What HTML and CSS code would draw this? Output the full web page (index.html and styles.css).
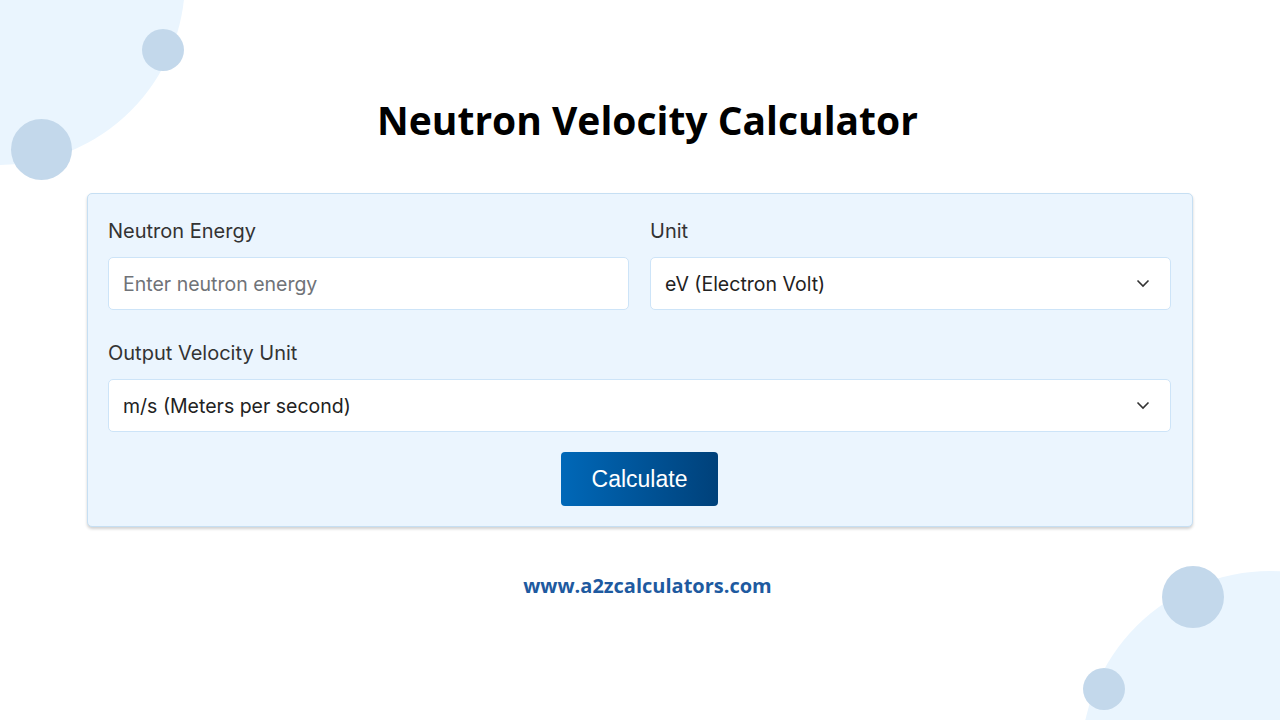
FILE: index.html
```html
<!DOCTYPE html>
<html lang="en">
<head>
<meta charset="utf-8">
<title>Neutron Velocity Calculator</title>
<link rel="stylesheet" href="styles.css">
</head>
<body>
<div class="deco">
  <span class="blob blob-tl"></span>
  <span class="dot dot-1"></span>
  <span class="dot dot-2"></span>
  <span class="blob blob-br"></span>
  <span class="dot dot-3"></span>
  <span class="dot dot-4"></span>
</div>
<main class="page">
  <h1 class="title">Neutron Velocity Calculator</h1>
  <section class="card">
    <div class="row">
      <div class="field">
        <label class="label">Neutron Energy</label>
        <div class="control"><span class="placeholder">Enter neutron energy</span></div>
      </div>
      <div class="field">
        <label class="label">Unit</label>
        <div class="control select"><span class="value">eV (Electron Volt)</span>
          <svg class="chev" width="14" height="9" viewBox="0 0 14 9"><path d="M1.5 1.5 L7 7 L12.5 1.5" fill="none" stroke="#333" stroke-width="1.6"/></svg>
        </div>
      </div>
    </div>
    <div class="field">
      <label class="label">Output Velocity Unit</label>
      <div class="control select"><span class="value">m/s (Meters per second)</span>
        <svg class="chev" width="14" height="9" viewBox="0 0 14 9"><path d="M1.5 1.5 L7 7 L12.5 1.5" fill="none" stroke="#333" stroke-width="1.6"/></svg>
      </div>
    </div>
    <div class="actions"><button class="btn">Calculate</button></div>
  </section>
  <p class="site">www.a2zcalculators.com</p>
</main>
</body>
</html>
```
FILE: styles.css
```css
* { box-sizing: border-box; }
html, body { margin: 0; padding: 0; }
body {
  width: 1280px;
  height: 720px;
  background: #ffffff;
  overflow: hidden;
  position: relative;
  font-family: Inter, "Noto Sans", sans-serif;
}
.deco { position: absolute; inset: 0; overflow: hidden; pointer-events: none; }
.blob, .dot { position: absolute; border-radius: 50%; display: block; }
.blob { background: #eaf5fe; }
.dot { background: #c3d8eb; }
.blob-tl { left: -185px; top: -205px; width: 370px; height: 370px; }
.blob-br { left: 1081px; top: 571px; width: 378px; height: 378px; }
.dot-1 { left: 142px; top: 29px; width: 42px; height: 42px; }
.dot-2 { left: 11px; top: 119px; width: 61px; height: 61px; }
.dot-3 { left: 1162px; top: 566px; width: 62px; height: 62px; }
.dot-4 { left: 1083px; top: 668px; width: 42px; height: 42px; }

.page {
  position: relative;
  padding: 94px 87px 0;
  display: flex;
  flex-direction: column;
  align-items: center;
}
.title {
  margin: 0 0 0 15px;
  font-family: "Open Sans", sans-serif;
  font-weight: 700;
  font-size: 39px;
  line-height: 52px;
  color: #000;
}
.card {
  margin-top: 47px;
  width: 1106px;
  background: #ebf5fe;
  border: 1px solid #c6dff3;
  border-radius: 5px;
  box-shadow: 0 2px 3px rgba(0,0,0,0.18);
  padding: 20px 21px 20px 20px;
  display: flex;
  flex-direction: column;
}
.row { display: grid; grid-template-columns: 1fr 1fr; gap: 21px; }
.field { display: flex; flex-direction: column; }
.row + .field { margin-top: 26px; }
.label {
  font-size: 20px;
  line-height: 34px;
  color: #333;
  margin-bottom: 9px;
}
.control {
  height: 53px;
  background: #fff;
  border: 1px solid #cde4f8;
  border-radius: 5px;
  padding: 0 14px;
  display: flex;
  align-items: center;
  justify-content: space-between;
  font-size: 19.5px;
}
.placeholder { color: #707378; }
.value { color: #222; }
.chev { margin-right: 6px; }
.actions { display: flex; justify-content: center; margin-top: 20px; }
.btn {
  width: 157px;
  height: 54px;
  border: none;
  border-radius: 4px;
  background: linear-gradient(90deg, #0068b8 0%, #00417a 100%);
  color: #fff;
  font-family: "Liberation Sans", Arial, sans-serif;
  font-size: 23px;
  padding: 0;
}
.site {
  margin: 45px 0 0 15px;
  font-family: "Open Sans", sans-serif;
  font-weight: 700;
  font-size: 20px;
  color: #1e5aa0;
}
```
